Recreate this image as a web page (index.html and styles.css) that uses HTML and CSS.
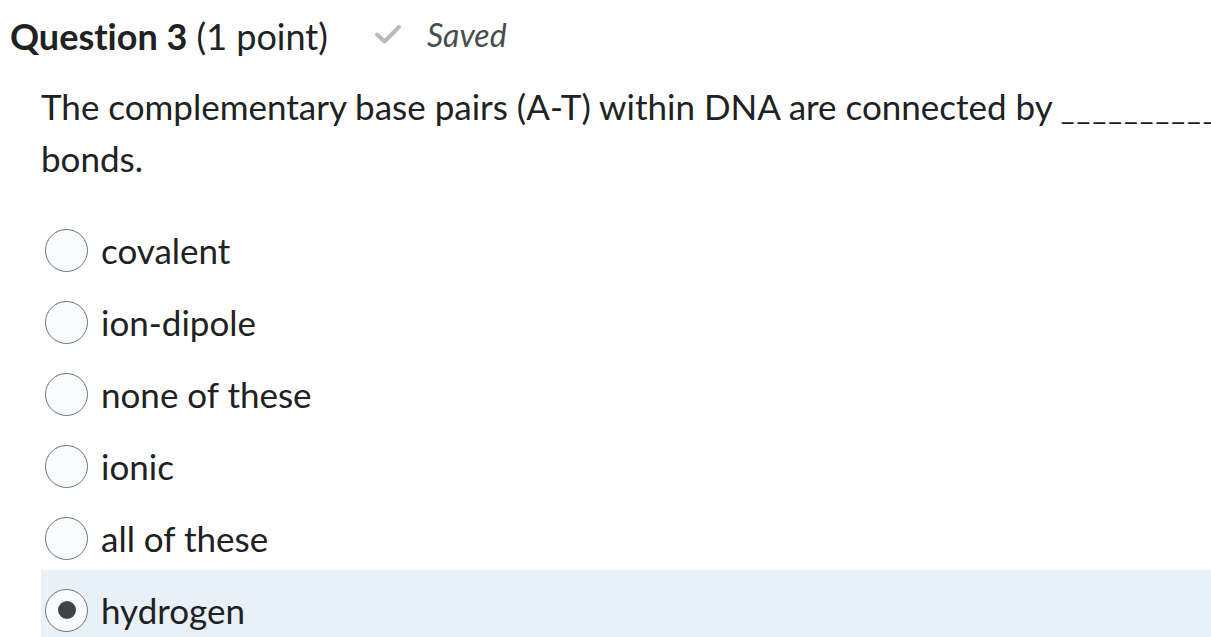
FILE: index.html
```html
<!DOCTYPE html>
<html>
<head>
<meta charset="utf-8">
<link rel="stylesheet" href="styles.css">
</head>
<body>
<div class="page">
  <div class="header">
    <h2 class="title"><strong>Question 3</strong> (1 point)</h2>
    <div class="saved">
      <svg class="check" viewBox="0 0 28 22" width="28" height="22"><path d="M3 11.5 L10.5 18.5 L25 4" fill="none" stroke="#b6babd" stroke-width="4" stroke-linecap="round" stroke-linejoin="round"/></svg>
      <span class="saved-text">Saved</span>
    </div>
  </div>
  <div class="question">
    <p class="stem">The complementary base pairs (A-T) within DNA are connected by <span class="blank">__________</span><br>bonds.</p>
    <ul class="options">
      <li class="option"><span class="radio"></span><span class="label">covalent</span></li>
      <li class="option"><span class="radio"></span><span class="label">ion-dipole</span></li>
      <li class="option"><span class="radio"></span><span class="label">none of these</span></li>
      <li class="option"><span class="radio"></span><span class="label">ionic</span></li>
      <li class="option"><span class="radio"></span><span class="label">all of these</span></li>
      <li class="option selected"><span class="radio checked"></span><span class="label">hydrogen</span></li>
    </ul>
  </div>
</div>
</body>
</html>
```
FILE: styles.css
```css
html, body {
  margin: 0;
  padding: 0;
  background: #ffffff;
  overflow: hidden;
}
body {
  font-family: Lato, "Open Sans", sans-serif;
  color: #202122;
  width: 1211px;
  height: 637px;
  font-variant-ligatures: none;
}
.page {
  padding: 13px 0 0 10px;
}
.header {
  display: flex;
  align-items: center;
  height: 46px;
}
.title {
  margin: 0;
  font-size: 36px;
  font-weight: 400;
  line-height: 46px;
  white-space: nowrap;
}
.title strong {
  font-weight: 700;
}
.saved {
  display: flex;
  align-items: center;
  margin-left: 46px;
  margin-top: -4px;
}
.check {
  display: block;
}
.saved-text {
  margin-left: 25px;
  font-size: 32px;
  font-style: italic;
  color: #494c4e;
}
.question {
  padding-left: 31px;
}
.stem {
  margin: 22px 0 0 0;
  font-size: 35px;
  line-height: 50px;
  white-space: nowrap;
}
.blank {
  font-size: 30px;
  letter-spacing: 2px;
}
.options {
  list-style: none;
  margin: 31px 0 0 0;
  padding: 0;
}
.option {
  display: flex;
  align-items: center;
  height: 72px;
  padding-left: 4px;
}
.option.selected {
  background: #e8f0fa;
  padding-top: 4px;
  margin-top: -4px;
}
.radio {
  box-sizing: border-box;
  width: 43px;
  height: 43px;
  border: 1.5px solid #6e7376;
  border-radius: 50%;
  background: #f9fbff;
  flex: none;
  display: flex;
  align-items: center;
  justify-content: center;
}
.radio.checked::after {
  content: "";
  width: 18px;
  height: 18px;
  border-radius: 50%;
  background: #404346;
}
.label {
  margin-left: 13px;
  font-size: 35px;
}
```
